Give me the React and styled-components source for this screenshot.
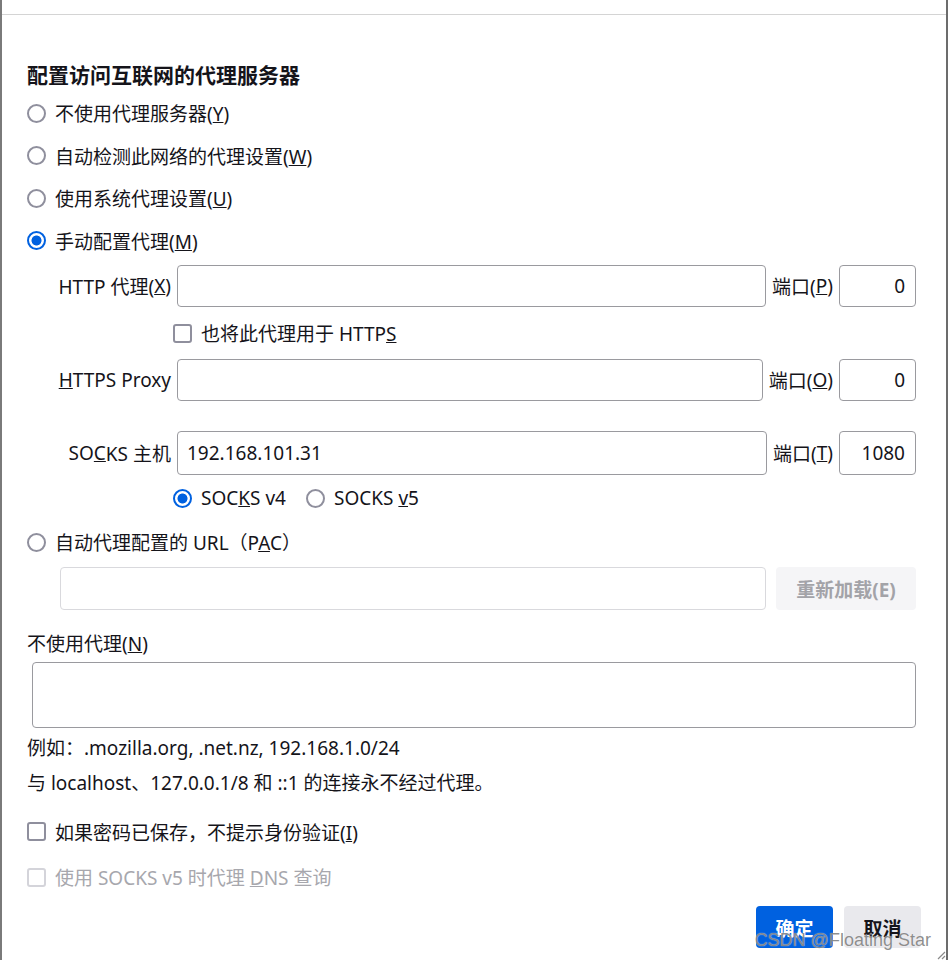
import React from 'react';
import styled, { createGlobalStyle } from 'styled-components';

const GlobalStyle = createGlobalStyle`
  html, body {
    margin: 0;
    padding: 0;
    background: #ffffff;
  }
  body {
    font-family: "Noto Sans", "Noto Sans CJK SC", sans-serif;
    color: #15141a;
  }
  * {
    box-sizing: border-box;
  }
`;

const Frame = styled.div`
  position: relative;
  width: 948px;
  height: 960px;
  overflow: hidden;
  background: #ffffff;
  border-left: 2px solid #7a7a7a;
  border-right: 2px solid #6c6c6c;
`;

const TopBar = styled.div`
  height: 15px;
  border-bottom: 1px solid #d4d4d4;
`;

const Content = styled.div`
  padding: 46px 30px 0 25px;
  font-size: 19px;
`;

const Heading = styled.h1`
  margin: 0 0 3px 0;
  font-size: 21px;
  line-height: 28px;
  font-weight: 700;
`;

const OptionRow = styled.label`
  display: flex;
  align-items: center;
  gap: 9px;
  height: ${(p) => p.$h || 42.5}px;
  margin-top: ${(p) => p.$mt || 0}px;
  padding-left: ${(p) => p.$indent || 0}px;
  color: ${(p) => (p.$disabled ? '#a7a7ad' : '#15141a')};
  white-space: nowrap;
`;

const Radio = styled.span`
  flex: none;
  width: 19px;
  height: 19px;
  border-radius: 50%;
  border: 2px solid ${(p) => (p.$checked ? '#0061e0' : '#8f8f9d')};
  background: ${(p) =>
    p.$checked ? 'radial-gradient(circle, #0061e0 0 4.6px, #ffffff 5.4px)' : '#ffffff'};
`;

const CheckBox = styled.span`
  flex: none;
  width: 19px;
  height: 19px;
  border-radius: 3px;
  border: 2px solid ${(p) => (p.$disabled ? '#d4d4da' : '#8f8f9d')};
  background: #ffffff;
`;

const Gap = styled.span`
  display: inline-block;
  width: ${(p) => p.$w}px;
`;

const FieldRow = styled.div`
  display: flex;
  align-items: stretch;
  gap: ${(p) => p.$gap || 6}px;
  height: ${(p) => p.$h || 42}px;
  margin-top: ${(p) => p.$mt || 0}px;
  padding-left: ${(p) => p.$indent || 0}px;
`;

const FieldLabel = styled.label`
  flex: none;
  width: 144px;
  display: flex;
  align-items: center;
  justify-content: flex-end;
  white-space: nowrap;
`;

const PortLabel = styled.label`
  flex: none;
  display: flex;
  align-items: center;
  white-space: nowrap;
`;

const TextInput = styled.input`
  flex: 1;
  min-width: 0;
  height: 100%;
  padding: 0 9px;
  font: inherit;
  font-size: 19px;
  color: #15141a;
  background: #ffffff;
  border: 1px solid ${(p) => (p.disabled ? '#d9d9dd' : '#9a9a9f')};
  border-radius: 4px;
  outline: none;
`;

const PortInput = styled(TextInput)`
  flex: none;
  width: 77px;
  text-align: right;
  padding-right: 10px;
`;

const GhostButton = styled.button`
  flex: none;
  width: 140px;
  border: none;
  border-radius: 4px;
  background: #f5f5f7;
  color: #a3a3a8;
  font: inherit;
  font-size: 19px;
  font-weight: 700;
`;

const PlainLabel = styled.div`
  margin-top: ${(p) => p.$mt || 0}px;
  line-height: ${(p) => p.$lh || 26}px;
  white-space: nowrap;
`;

const Area = styled.textarea`
  display: block;
  width: calc(100% - 5px);
  height: 66px;
  margin: 5px 0 0 5px;
  border: 1px solid #9a9a9f;
  border-radius: 4px;
  resize: none;
  outline: none;
  background: #ffffff;
`;

const ButtonBar = styled.div`
  display: flex;
  justify-content: flex-end;
  gap: 11px;
  margin: 6px -5px 0 0;
`;

const DialogButton = styled.button`
  width: 77px;
  height: 42px;
  border: none;
  border-radius: 4px;
  font-family: "Noto Sans CJK SC", sans-serif;
  font-size: 19px;
  font-weight: 700;
  background: ${(p) => (p.$primary ? '#0061e0' : '#e9e9ed')};
  color: ${(p) => (p.$primary ? '#ffffff' : '#15141a')};
`;

// screenshot watermark, lies over the buttons
const Watermark = styled.div`
  position: absolute;
  right: 15px;
  bottom: 7px;
  font-family: "Liberation Sans", sans-serif;
  font-size: 18px;
  line-height: 26px;
  color: rgba(105, 105, 105, 0.75);
  text-shadow: 0 0 1px rgba(255, 255, 255, 0.9);
  pointer-events: none;
`;

const Grip = styled.svg`
  position: absolute;
  right: 0;
  bottom: 0;
`;

export default function App() {
  return (
    <>
      <GlobalStyle />
      <Frame>
        <TopBar />
        <Content>
          <Heading>配置访问互联网的代理服务器</Heading>

          <OptionRow>
            <Radio />
            <span>不使用代理服务器(<u>Y</u>)</span>
          </OptionRow>
          <OptionRow>
            <Radio />
            <span>自动检测此网络的代理设置(<u>W</u>)</span>
          </OptionRow>
          <OptionRow>
            <Radio />
            <span>使用系统代理设置(<u>U</u>)</span>
          </OptionRow>
          <OptionRow>
            <Radio $checked />
            <span>手动配置代理(<u>M</u>)</span>
          </OptionRow>

          <FieldRow $mt={3}>
            <FieldLabel>HTTP 代理(<u>X</u>)</FieldLabel>
            <TextInput readOnly value="" />
            <PortLabel>端口(<u>P</u>)</PortLabel>
            <PortInput readOnly value="0" />
          </FieldRow>
          <OptionRow $h={52} $indent={146}>
            <CheckBox />
            <span>也将此代理用于 HTTP<u>S</u></span>
          </OptionRow>
          <FieldRow>
            <FieldLabel><u>H</u>TTPS Proxy</FieldLabel>
            <TextInput readOnly value="" />
            <PortLabel>端口(<u>O</u>)</PortLabel>
            <PortInput readOnly value="0" />
          </FieldRow>
          <FieldRow $mt={30} $h={44}>
            <FieldLabel>SO<u>C</u>KS 主机</FieldLabel>
            <TextInput readOnly value="192.168.101.31" />
            <PortLabel>端口(<u>T</u>)</PortLabel>
            <PortInput readOnly value="1080" />
          </FieldRow>
          <OptionRow $h={46} $indent={146}>
            <Radio $checked />
            <span>SOC<u>K</u>S v4</span>
            <Gap $w={2} />
            <Radio />
            <span>SOCKS <u>v</u>5</span>
          </OptionRow>

          <OptionRow $h={42}>
            <Radio />
            <span>自动代理配置的 URL（P<u>A</u>C）</span>
          </OptionRow>
          <FieldRow $mt={4} $h={43} $indent={33} $gap={10}>
            <TextInput disabled value="" readOnly />
            <GhostButton disabled>重新加载(E)</GhostButton>
          </FieldRow>

          <PlainLabel $mt={21}>不使用代理(<u>N</u>)</PlainLabel>
          <Area readOnly value="" />

          <PlainLabel $mt={3} $lh={35}>例如：.mozilla.org, .net.nz, 192.168.1.0/24</PlainLabel>
          <PlainLabel $lh={35}>与 localhost、127.0.0.1/8 和 ::1 的连接永不经过代理。</PlainLabel>

          <OptionRow $h={45} $mt={8}>
            <CheckBox />
            <span>如果密码已保存，不提示身份验证(<u>I</u>)</span>
          </OptionRow>
          <OptionRow $h={46} $disabled>
            <CheckBox $disabled />
            <span>使用 SOCKS v5 时代理 <u>D</u>NS 查询</span>
          </OptionRow>

          <ButtonBar>
            <DialogButton $primary>确定</DialogButton>
            <DialogButton>取消</DialogButton>
          </ButtonBar>
        </Content>

        <Watermark>CSDN @Floating Star</Watermark>
        <Grip width="12" height="12" viewBox="0 0 12 12">
          <path d="M11 4 L4 11 M11 8 L8 11" stroke="#8a8a8a" strokeWidth="1.2" fill="none" />
        </Grip>
      </Frame>
    </>
  );
}
